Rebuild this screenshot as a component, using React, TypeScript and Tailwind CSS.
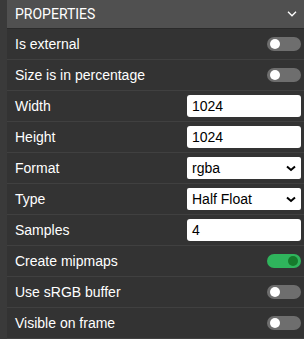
import React from "react";

function Toggle({ on }: { on?: boolean }) {
  return (
    <div
      className={`w-[34px] h-[14px] rounded-full flex items-center px-[3px] ${
        on ? "bg-[#2fb45c] justify-end" : "bg-[#6e6e6e] justify-start"
      }`}
    >
      <div className={`w-[10px] h-[10px] rounded-full ${on ? "bg-[#167a2c]" : "bg-white"}`} />
    </div>
  );
}

function Row({ label, children }: { label: string; children: React.ReactNode }) {
  return (
    <div className="h-[31px] flex items-center justify-between pl-2 pr-[3px] border-b border-[#404040]">
      <span className="text-[14px] text-white">{label}</span>
      {children}
    </div>
  );
}

function Field({ value }: { value: string }) {
  return (
    <div className="w-[114px] h-[22px] bg-white rounded-[3px] flex items-center px-[5px] text-[14px] text-black">
      {value}
    </div>
  );
}

function Select({ value }: { value: string }) {
  return (
    <div className="w-[114px] h-[22px] bg-white rounded-[2px] flex items-center justify-between px-[5px] text-[14px] text-black">
      <span>{value}</span>
      <svg width="10" height="7" viewBox="0 0 10 7">
        <path d="M1 1.5 L5 5 L9 1.5" fill="none" stroke="#000" strokeWidth="2" />
      </svg>
    </div>
  );
}

export default function App() {
  return (
    <div className="w-[304px] h-[339px] flex bg-[#333333] font-['Liberation_Sans',Arial,sans-serif] overflow-hidden">
      <div className="w-[7px] bg-[#3a3a3a]" />
      <div className="flex-1 flex flex-col">
        <div className="h-[29px] shrink-0 bg-[#505050] flex items-center justify-between pl-2 pr-[7px] border-b border-[#2a2a2a]">
          <span className="text-[14px] text-white font-['Roboto',sans-serif]">PROPERTIES</span>
          <svg width="10" height="6" viewBox="0 0 10 6">
            <path d="M1 0.8 L5 4.8 L9 0.8" fill="none" stroke="#fff" strokeWidth="1.3" />
          </svg>
        </div>
        <Row label="Is external"><Toggle /></Row>
        <Row label="Size is in percentage"><Toggle /></Row>
        <Row label="Width"><Field value="1024" /></Row>
        <Row label="Height"><Field value="1024" /></Row>
        <Row label="Format"><Select value="rgba" /></Row>
        <Row label="Type"><Select value="Half Float" /></Row>
        <Row label="Samples"><Field value="4" /></Row>
        <Row label="Create mipmaps"><Toggle on /></Row>
        <Row label="Use sRGB buffer"><Toggle /></Row>
        <Row label="Visible on frame"><Toggle /></Row>
      </div>
    </div>
  );
}
